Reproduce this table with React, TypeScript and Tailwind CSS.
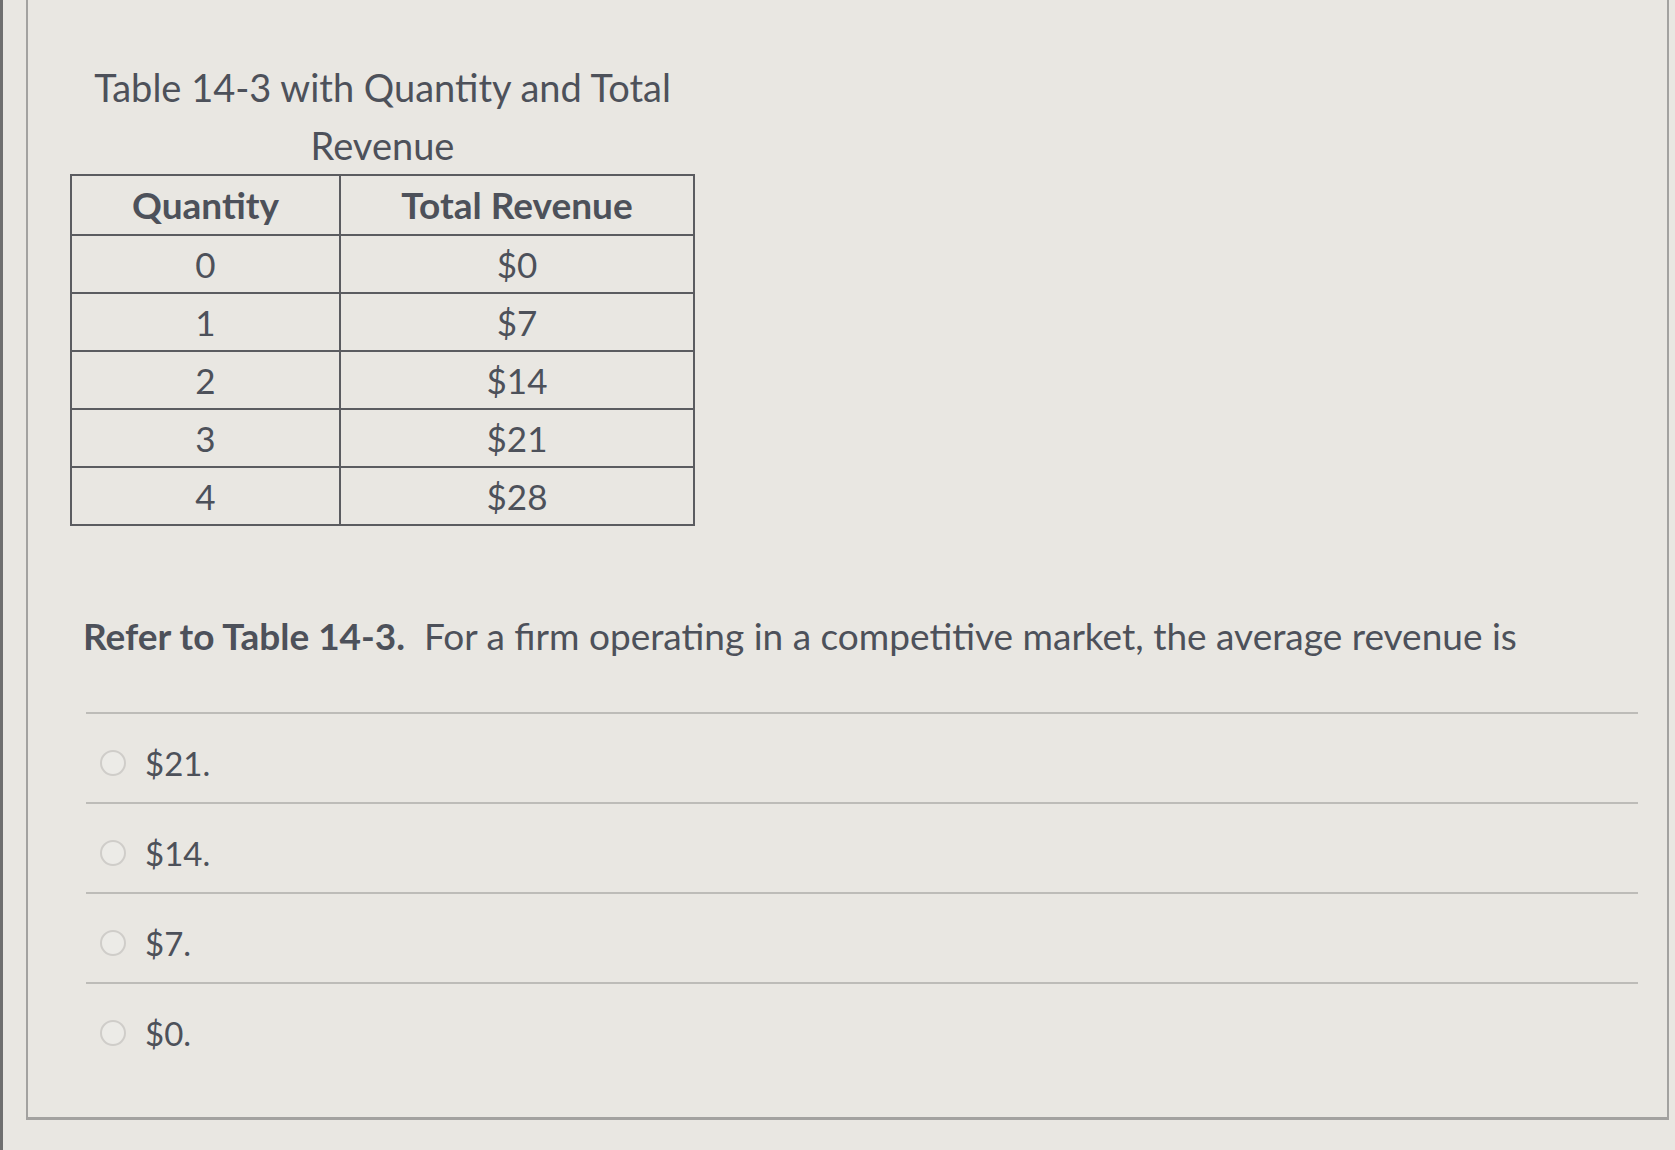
import React from 'react';

const rows = [
  { q: '0', tr: '$0' },
  { q: '1', tr: '$7' },
  { q: '2', tr: '$14' },
  { q: '3', tr: '$21' },
  { q: '4', tr: '$28' },
];

const options = ['$21.', '$14.', '$7.', '$0.'];

const Option = ({ label }: { label: string }) => (
  <div className="border-t-2 border-[#bdbcb8] h-[90px] pt-[10px] flex items-center">
    <span className="ml-[14px] w-[26px] h-[26px] rounded-full border-2 border-[#cfcdc9] bg-[#ecebe7]" />
    <span className="ml-[19px] text-[33px] text-[#4d515a] leading-none">{label}</span>
  </div>
);

export default function App() {
  return (
    <div
      className="w-[1675px] h-[1150px] bg-[#e9e7e2] border-l-[3px] border-[#6f6f6f] overflow-hidden"
      style={{ fontFamily: 'Lato, "Open Sans", sans-serif' }}
    >
      <div className="ml-[23px] w-[1643px] h-[1120px] border-l-2 border-r-2 border-b-[3px] border-[#a3a2a0] pt-[58px]">
        <div className="ml-[42px] w-[625px]">
          <p className="text-center text-[38px] leading-[58px] text-[#4d515a]">
            Table 14-3 with Quantity and Total
            <br />
            Revenue
          </p>
          <table className="w-[625px] border-collapse border-2 border-[#5b5c60] text-[#4d515a] text-center">
            <thead>
              <tr className="h-[60px]">
                <th className="w-[269px] border-2 border-[#5b5c60] text-[37px] font-bold">Quantity</th>
                <th className="border-2 border-[#5b5c60] text-[37px] font-bold">Total Revenue</th>
              </tr>
            </thead>
            <tbody>
              {rows.map((r) => (
                <tr key={r.q} className="h-[58px]">
                  <td className="border-2 border-[#5b5c60] text-[35px]">{r.q}</td>
                  <td className="border-2 border-[#5b5c60] text-[35px]">{r.tr}</td>
                </tr>
              ))}
            </tbody>
          </table>
        </div>

        <p className="mt-[90px] ml-[55px] text-[37px] text-[#4d515a] leading-[40px]">
          <span className="font-bold">Refer to Table 14-3.</span>&nbsp; For a firm operating in a competitive market, the average revenue is
        </p>

        <div className="mt-[56px] ml-[58px] w-[1552px]">
          {options.map((o) => (
            <Option key={o} label={o} />
          ))}
        </div>
      </div>
    </div>
  );
}
